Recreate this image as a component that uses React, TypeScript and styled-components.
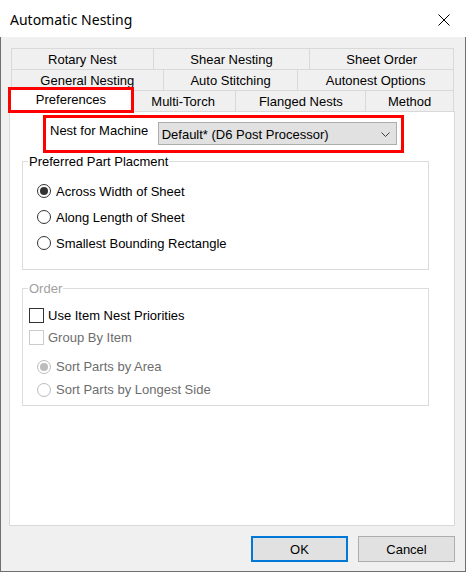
import { ReactNode } from 'react';
import styled, { createGlobalStyle } from 'styled-components';

const GlobalStyle = createGlobalStyle`
  html, body {
    margin: 0;
    padding: 0;
    background: #ffffff;
  }
  body {
    font-family: 'Liberation Sans', Arial, sans-serif;
    font-size: 13px;
    color: #000000;
  }
`;

type TabDef = { label: string; width: number; selected?: boolean };

const tabRows: TabDef[][] = [
  [
    { label: 'Rotary Nest', width: 143 },
    { label: 'Shear Nesting', width: 158 },
    { label: 'Sheet Order', width: 145 },
  ],
  [
    { label: 'General Nesting', width: 153 },
    { label: 'Auto Stitching', width: 136 },
    { label: 'Autonest Options', width: 157 },
  ],
  [
    { label: 'Preferences', width: 120, selected: true },
    { label: 'Multi-Torch', width: 107 },
    { label: 'Flanged Nests', width: 131 },
    { label: 'Method', width: 89 },
  ],
];

export default function App() {
  return (
    <>
      <GlobalStyle />
      <Window>
        <TitleBar>
          <Title>Automatic Nesting</Title>
          <CloseButton aria-label="Close">
            <svg width="12" height="12" viewBox="0 0 12 12">
              <path d="M0.5 0.5 L11.5 11.5 M11.5 0.5 L0.5 11.5" stroke="#000" strokeWidth="1" />
            </svg>
          </CloseButton>
        </TitleBar>
        <Body>
          <TabStrip>
            {tabRows.map((row, i) => (
              <TabRow key={i}>
                {row.map((tab) => (
                  <Tab key={tab.label} $w={tab.width} $selected={!!tab.selected}>
                    {tab.label}
                  </Tab>
                ))}
              </TabRow>
            ))}
          </TabStrip>
          <Panel>
            <MachineRow>
              <MachineLabel>Nest for Machine</MachineLabel>
              <Combo>
                <span>Default* (D6 Post Processor)</span>
                <svg width="9" height="5" viewBox="0 0 9 5">
                  <path d="M0.5 0.5 L4.5 4.5 L8.5 0.5" fill="none" stroke="#3c3c3c" strokeWidth="1" />
                </svg>
              </Combo>
            </MachineRow>

            <Group>
              <Legend>Preferred Part Placment</Legend>
              <RadioList $rowHeight={26} $top={0}>
                <Radio checked>Across Width of Sheet</Radio>
                <Radio>Along Length of Sheet</Radio>
                <Radio>Smallest Bounding Rectangle</Radio>
              </RadioList>
            </Group>

            <Group $order>
              <Legend $disabled>Order</Legend>
              <Check>Use Item Nest Priorities</Check>
              <Check disabled>Group By Item</Check>
              <RadioList $rowHeight={23} $top={7}>
                <Radio checked disabled>
                  Sort Parts by Area
                </Radio>
                <Radio disabled>Sort Parts by Longest Side</Radio>
              </RadioList>
            </Group>
          </Panel>
          <ButtonRow>
            <Button $default>OK</Button>
            <Button>Cancel</Button>
          </ButtonRow>
        </Body>
      </Window>
    </>
  );
}

function Radio(props: { children: ReactNode; checked?: boolean; disabled?: boolean }) {
  const { children, checked, disabled } = props;
  return (
    <OptionRow $disabled={disabled}>
      <RadioCircle $disabled={disabled}>{checked && <RadioDot $disabled={disabled} />}</RadioCircle>
      {children}
    </OptionRow>
  );
}

function Check(props: { children: ReactNode; disabled?: boolean }) {
  const { children, disabled } = props;
  return (
    <CheckRow $disabled={disabled}>
      <CheckBox $disabled={disabled} />
      {children}
    </CheckRow>
  );
}

const Window = styled.div`
  width: 466px;
  height: 572px;
  display: flex;
  flex-direction: column;
  box-sizing: border-box;
`;

const TitleBar = styled.div`
  height: 37px;
  flex-shrink: 0;
  display: flex;
  align-items: center;
  justify-content: space-between;
  padding: 2px 16px 0 10px;
  box-sizing: border-box;
  background: #ffffff;
`;

const Title = styled.div`
  font-family: 'Noto Sans', 'Open Sans', sans-serif;
  font-size: 14px;
  color: #000000;
`;

const CloseButton = styled.div`
  display: flex;
  align-items: center;
`;

const Body = styled.div`
  flex: 1;
  display: flex;
  flex-direction: column;
  background: #f0f0f0;
  border: 1px solid #6f6f6f;
  border-top: none;
  padding: 11px 10px 9px 8px;
`;

const TabStrip = styled.div`
  display: flex;
  flex-direction: column;
  padding: 0 2px;
`;

const TabRow = styled.div`
  display: flex;
  align-items: flex-end;
  height: 21px;
`;

const Tab = styled.div<{ $w: number; $selected?: boolean }>`
  box-sizing: border-box;
  width: ${(p) => p.$w}px;
  height: 21px;
  margin-right: -1px;
  display: flex;
  align-items: center;
  justify-content: center;
  padding-top: 1px;
  border: 1px solid #d9d9d9;
  border-bottom: none;
  background: #f0f0f0;
  white-space: nowrap;

  ${(p) =>
    p.$selected &&
    `
    position: relative;
    z-index: 1;
    width: ${p.$w + 4}px;
    height: 24px;
    margin: 0 -3px -1px -2px;
    padding-top: 0;
    padding-bottom: 2px;
    background: #ffffff;
    outline: 3px solid #ff0000;
    outline-offset: -2px;
  `}
`;

const Panel = styled.div`
  height: 415px;
  box-sizing: border-box;
  background: #ffffff;
  border: 1px solid #d9d9d9;
  display: flex;
  flex-direction: column;
  padding: 3px 0 0 12px;
`;

const MachineRow = styled.div`
  box-sizing: border-box;
  width: 361px;
  height: 38px;
  margin-left: 21px;
  border: 3px solid #ff0000;
  display: flex;
  align-items: flex-start;
  padding: 4px 4px 0 4px;
`;

const MachineLabel = styled.div`
  width: 108px;
  padding-top: 1px;
`;

const Combo = styled.div`
  box-sizing: border-box;
  width: 240px;
  height: 23px;
  background: #e1e1e1;
  border: 1px solid #adadad;
  display: flex;
  align-items: center;
  justify-content: space-between;
  padding: 1px 6px 0 3px;
`;

const Group = styled.fieldset<{ $order?: boolean }>`
  box-sizing: border-box;
  width: 407px;
  margin: ${(p) => (p.$order ? '11px 0 0 0' : '1px 0 0 0')};
  padding: ${(p) => (p.$order ? '8px 0 4px 6px' : '9px 0 13px 6px')};
  border: 1px solid #dcdcdc;
  min-width: 0;
`;

const Legend = styled.legend<{ $disabled?: boolean }>`
  padding: 0 1px;
  margin-left: -1px;
  line-height: 15px;
  color: ${(p) => (p.$disabled ? '#a0a0a0' : '#000000')};
`;

const RadioList = styled.div<{ $rowHeight: number; $top: number }>`
  display: grid;
  grid-auto-rows: ${(p) => p.$rowHeight}px;
  margin: ${(p) => p.$top}px 0 0 8px;
`;

const OptionRow = styled.div<{ $disabled?: boolean }>`
  display: flex;
  align-items: center;
  gap: 5px;
  color: ${(p) => (p.$disabled ? '#6d6d6d' : '#000000')};
`;

const RadioCircle = styled.span<{ $disabled?: boolean }>`
  box-sizing: border-box;
  width: 14px;
  height: 14px;
  border-radius: 50%;
  border: 1px solid ${(p) => (p.$disabled ? '#bcbcbc' : '#333333')};
  background: #ffffff;
  display: flex;
  align-items: center;
  justify-content: center;
`;

const RadioDot = styled.span<{ $disabled?: boolean }>`
  width: 8px;
  height: 8px;
  border-radius: 50%;
  background: ${(p) => (p.$disabled ? '#bcbcbc' : '#333333')};
`;

const CheckRow = styled.div<{ $disabled?: boolean }>`
  height: 22px;
  display: flex;
  align-items: center;
  gap: 4px;
  color: ${(p) => (p.$disabled ? '#6d6d6d' : '#000000')};
`;

const CheckBox = styled.span<{ $disabled?: boolean }>`
  box-sizing: border-box;
  width: 15px;
  height: 15px;
  border: 1px solid ${(p) => (p.$disabled ? '#cccccc' : '#333333')};
  background: #ffffff;
`;

const ButtonRow = styled.div`
  display: flex;
  justify-content: flex-end;
  gap: 10px;
  margin-top: 10px;
`;

const Button = styled.div<{ $default?: boolean }>`
  box-sizing: border-box;
  width: 97px;
  height: 26px;
  display: flex;
  align-items: center;
  justify-content: center;
  background: #e1e1e1;
  border: ${(p) => (p.$default ? '2px solid #0078d7' : '1px solid #adadad')};
`;
